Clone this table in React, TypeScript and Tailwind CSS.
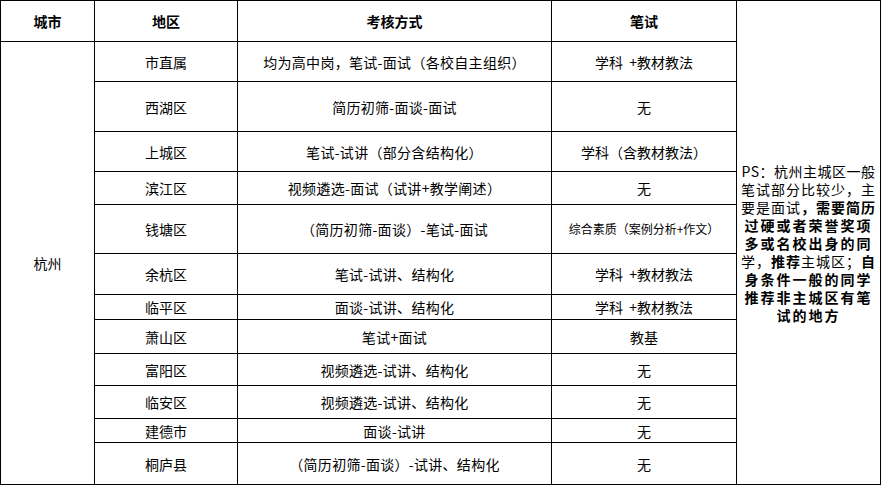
import React from "react";

type Row = { h: string; area: string; method: string; exam: string; small?: boolean };

const rows: Row[] = [
  { h: "h-[40px]", area: "市直属", method: "均为高中岗，笔试-面试（各校自主组织）", exam: "学科\u00a0\u00a0+教材教法" },
  { h: "h-[50px]", area: "西湖区", method: "简历初筛-面谈-面试", exam: "无" },
  { h: "h-[40px]", area: "上城区", method: "笔试-试讲（部分含结构化）", exam: "学科（含教材教法）" },
  { h: "h-[33px]", area: "滨江区", method: "视频遴选-面试（试讲+教学阐述）", exam: "无" },
  { h: "h-[49px]", area: "钱塘区", method: "（简历初筛-面谈）-笔试-面试", exam: "综合素质（案例分析+作文）", small: true },
  { h: "h-[41px]", area: "余杭区", method: "笔试-试讲、结构化", exam: "学科\u00a0\u00a0+教材教法" },
  { h: "h-[25px]", area: "临平区", method: "面谈-试讲、结构化", exam: "学科\u00a0\u00a0+教材教法" },
  { h: "h-[34px]", area: "萧山区", method: "笔试+面试", exam: "教基" },
  { h: "h-[32px]", area: "富阳区", method: "视频遴选-试讲、结构化", exam: "无" },
  { h: "h-[33px]", area: "临安区", method: "视频遴选-试讲、结构化", exam: "无" },
  { h: "h-[24px]", area: "建德市", method: "面谈-试讲", exam: "无" },
  { h: "h-[42px]", area: "桐庐县", method: "（简历初筛-面谈）-试讲、结构化", exam: "无" },
];

const cell = "border border-black p-0 text-center align-middle";

export default function App() {
  return (
    <div
      className="w-[881px] h-[485px] bg-white text-black"
      style={{ fontFamily: '"Noto Sans CJK SC", "Noto Sans", sans-serif' }}
    >
      <table className="border-collapse table-fixed w-[880px] text-[14px] leading-[18px]">
        <colgroup>
          <col className="w-[94px]" />
          <col className="w-[143px]" />
          <col className="w-[314px]" />
          <col className="w-[185px]" />
          <col className="w-[144px]" />
        </colgroup>
        <tbody>
          <tr className="h-[41px]">
            <td className={`${cell} font-bold`}>城市</td>
            <td className={`${cell} font-bold`}>地区</td>
            <td className={`${cell} font-bold`}>考核方式</td>
            <td className={`${cell} font-bold`}>笔试</td>
            <td className={`${cell} px-0`} rowSpan={13}>
              <div className="flex flex-col items-center whitespace-nowrap text-[14px] leading-[18px]">
                <span className="tracking-[0.5px]">PS：杭州主城区一般</span>
                <span className="tracking-[1px]">笔试部分比较少，主</span>
                <span className="tracking-[1px]">
                  要是面试<b>，需要简历</b>
                </span>
                <b className="tracking-[2px]">过硬或者荣誉奖项</b>
                <b className="tracking-[2px]">多或名校出身的同</b>
                <span className="tracking-[1px]">
                  学，<b>推荐</b>主城区；<b>自</b>
                </span>
                <b className="tracking-[2px]">身条件一般的同学</b>
                <b className="tracking-[2px]">推荐非主城区有笔</b>
                <b className="tracking-[2px]">试的地方</b>
              </div>
            </td>
          </tr>
          {rows.map((r, i) => (
            <tr key={r.area} className={r.h}>
              {i === 0 && (
                <td className={cell} rowSpan={12}>
                  杭州
                </td>
              )}
              <td className={cell}>{r.area}</td>
              <td className={`${cell} tracking-[0.3px]`}>{r.method}</td>
              <td className={`${cell} ${r.small ? "text-[12px]" : ""}`}>{r.exam}</td>
            </tr>
          ))}
        </tbody>
      </table>
    </div>
  );
}
